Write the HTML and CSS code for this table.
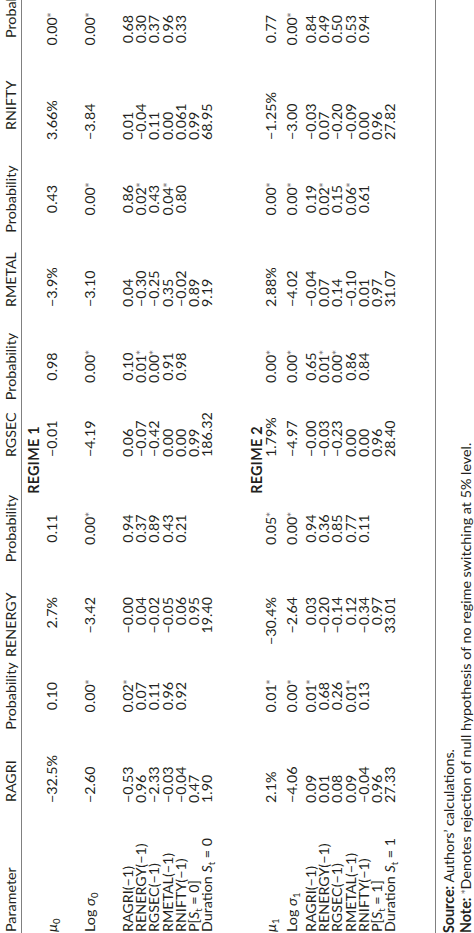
FILE: index.html
```html
<!DOCTYPE html>
<html lang="en">
<head>
<meta charset="utf-8">
<title>Regime switching estimates</title>
<link rel="stylesheet" href="styles.css">
</head>
<body>
<div class="clip">
<div class="sheet">
  <div class="row head">
    <span>Parameter</span><span>RAGRI</span><span>Probability</span><span>RENERGY</span><span>Probability</span><span>RGSEC</span><span>Probability</span><span>RMETAL</span><span>Probability</span><span>RNIFTY</span><span>Probability</span>
  </div>
  <div class="regime g1">REGIME 1</div>
  <div class="row g2"><span><i>μ</i><sub>0</sub></span><span>−32.5%</span><span>0.10</span><span>2.7%</span><span>0.11</span><span>−0.01</span><span>0.98</span><span>−3.9%</span><span>0.43</span><span>3.66%</span><span>0.00<sup>*</sup></span></div>
  <div class="row g3"><span>Log <i>σ</i><sub>0</sub></span><span>−2.60</span><span>0.00<sup>*</sup></span><span>−3.42</span><span>0.00<sup>*</sup></span><span>−4.19</span><span>0.00<sup>*</sup></span><span>−3.10</span><span>0.00<sup>*</sup></span><span>−3.84</span><span>0.00<sup>*</sup></span></div>
  <div class="row g3"><span>RAGRI(−1)</span><span>−0.53</span><span>0.02<sup>*</sup></span><span>−0.00</span><span>0.94</span><span>0.06</span><span>0.10</span><span>0.04</span><span>0.86</span><span>0.01</span><span>0.68</span></div>
  <div class="row"><span>RENERGY(−1)</span><span>0.96</span><span>0.07</span><span>0.04</span><span>0.37</span><span>−0.07</span><span>0.01<sup>*</sup></span><span>−0.30</span><span>0.02<sup>*</sup></span><span>−0.04</span><span>0.30</span></div>
  <div class="row"><span>RGSEC(−1)</span><span>−2.33</span><span>0.11</span><span>−0.02</span><span>0.89</span><span>−0.42</span><span>0.00<sup>*</sup></span><span>−0.25</span><span>0.43</span><span>0.11</span><span>0.37</span></div>
  <div class="row"><span>RMETAL(−1)</span><span>−0.03</span><span>0.96</span><span>−0.05</span><span>0.43</span><span>0.00</span><span>0.91</span><span>0.35</span><span>0.04<sup>*</sup></span><span>0.00</span><span>0.96</span></div>
  <div class="row"><span>RNIFTY(−1)</span><span>−0.04</span><span>0.92</span><span>0.06</span><span>0.21</span><span>0.00</span><span>0.98</span><span>−0.02</span><span>0.80</span><span>0.061</span><span>0.33</span></div>
  <div class="row"><span>P[<i>S</i><sub>t</sub> = 0]</span><span>0.47</span><span></span><span>0.95</span><span></span><span>0.99</span><span></span><span>0.89</span><span></span><span>0.99</span><span></span></div>
  <div class="row"><span>Duration <i>S</i><sub>t</sub> = 0</span><span>1.90</span><span></span><span>19.40</span><span></span><span>186.32</span><span></span><span>9.19</span><span></span><span>68.95</span><span></span></div>
  <div class="regime g4">REGIME 2</div>
  <div class="row g5"><span><i>μ</i><sub>1</sub></span><span>2.1%</span><span>0.01<sup>*</sup></span><span>−30.4%</span><span>0.05<sup>*</sup></span><span>1.79%</span><span>0.00<sup>*</sup></span><span>2.88%</span><span>0.00<sup>*</sup></span><span>−1.25%</span><span>0.77</span></div>
  <div class="row g6"><span>Log <i>σ</i><sub>1</sub></span><span>−4.06</span><span>0.00<sup>*</sup></span><span>−2.64</span><span>0.00<sup>*</sup></span><span>−4.97</span><span>0.00<sup>*</sup></span><span>−4.02</span><span>0.00<sup>*</sup></span><span>−3.00</span><span>0.00<sup>*</sup></span></div>
  <div class="row g7"><span>RAGRI(−1)</span><span>0.09</span><span>0.01<sup>*</sup></span><span>0.03</span><span>0.94</span><span>−0.00</span><span>0.65</span><span>−0.04</span><span>0.19</span><span>−0.03</span><span>0.84</span></div>
  <div class="row"><span>RENERGY(−1)</span><span>0.01</span><span>0.68</span><span>−0.20</span><span>0.36</span><span>−0.03</span><span>0.01<sup>*</sup></span><span>0.07</span><span>0.02<sup>*</sup></span><span>0.07</span><span>0.49</span></div>
  <div class="row"><span>RGSEC(−1)</span><span>0.08</span><span>0.26</span><span>−0.14</span><span>0.85</span><span>−0.23</span><span>0.00<sup>*</sup></span><span>0.14</span><span>0.15</span><span>−0.20</span><span>0.50</span></div>
  <div class="row"><span>RMETAL(−1)</span><span>0.09</span><span>0.01<sup>*</sup></span><span>0.12</span><span>0.77</span><span>0.00</span><span>0.86</span><span>−0.10</span><span>0.06<sup>*</sup></span><span>−0.09</span><span>0.53</span></div>
  <div class="row"><span>RNIFTY(−1)</span><span>−0.04</span><span>0.13</span><span>−0.34</span><span>0.11</span><span>0.00</span><span>0.84</span><span>0.01</span><span>0.61</span><span>0.00</span><span>0.94</span></div>
  <div class="row"><span>P[<i>S</i><sub>t</sub> = 1]</span><span>0.96</span><span></span><span>0.97</span><span></span><span>0.96</span><span></span><span>0.97</span><span></span><span>0.96</span><span></span></div>
  <div class="row"><span>Duration <i>S</i><sub>t</sub> = 1</span><span>27.33</span><span></span><span>33.01</span><span></span><span>28.40</span><span></span><span>31.07</span><span></span><span>27.82</span><span></span></div>
  <div class="endrule"></div>
  <div class="note first"><b>Source:</b> Authors’ calculations.</div>
  <div class="note"><b>Note:</b> <sup class="ast">*</sup>Denotes rejection of null hypothesis of no regime switching at 5% level.</div>
</div>
</div>
</body>
</html>
```
FILE: styles.css
```css
html, body {
  margin: 0;
  padding: 0;
  overflow: hidden;
  background: #ffffff;
}
.clip {
  width: 474px;
  height: 933px;
  overflow: hidden;
}
.sheet {
  width: 960px;
  height: 474px;
  transform-origin: 0 0;
  transform: translateY(933px) rotate(-90deg);
  font-family: Lato, "Open Sans", "DejaVu Sans", sans-serif;
  font-size: 14.3px;
  color: #231f20;
}
.row {
  display: grid;
  grid-template-columns: 130px 70px 74px 78px 105px 73px 73px 97px 68px 92px 100px;
  height: 13.25px;
  line-height: 13.25px;
  white-space: nowrap;
}
.row > span {
  display: block;
  text-align: left;
  overflow: visible;
}
.row > span:nth-child(1) { padding-left: 1px; }
.row > span:nth-child(3),
.row > span:nth-child(5),
.row > span:nth-child(7),
.row > span:nth-child(9) { text-align: center; }
.row > span:nth-child(11) { text-align: center; padding-right: 12px; }
.row > span:nth-child(4) { text-align: right; padding-right: 16px; }
.row > span:nth-child(6) { padding-left: 19px; }
.row > span:nth-child(8) { padding-left: 23px; }
.row > span:nth-child(10) { padding-left: 25px; }

.head {
  height: 21px;
  line-height: 21px;
  border-bottom: 1.5px solid #808080;
}
.head > span:nth-child(2) { padding-left: 1px; }
.head > span:nth-child(4) { text-align: left; padding-left: 2px; padding-right: 0; }
.head > span:nth-child(10) { padding-left: 35px; }
.head > span:nth-child(11) { text-align: left; padding-left: 35px; padding-right: 0; }

.regime {
  height: 13.25px;
  line-height: 13.25px;
  text-align: center;
  padding-right: 14px;
  font-weight: 700;
  letter-spacing: 0.3px;
}
.g1 { margin-top: 5px; }
.g2 { margin-top: 4.65px; }
.g3 { margin-top: 24.75px; }
.g4 { margin-top: 36.25px; }
.g5 { margin-top: 0.75px; }
.g6 { margin-top: 7.75px; }
.g7 { margin-top: 5.75px; }

.endrule {
  margin-top: 38.85px;
  border-top: 1.5px solid #808080;
}

.row i { font-style: italic; }
.row sub {
  font-size: 9.5px;
  line-height: 0;
  vertical-align: -3px;
}
.row sup, .ast {
  font-family: "DejaVu Sans", sans-serif;
  font-size: 9px;
  line-height: 0;
  vertical-align: 3px;
  color: #6a6a6a;
}
.note {
  height: 17px;
  line-height: 17px;
  white-space: nowrap;
}
.note.first { margin-top: 4px; }
.note b { font-weight: 700; }
```
